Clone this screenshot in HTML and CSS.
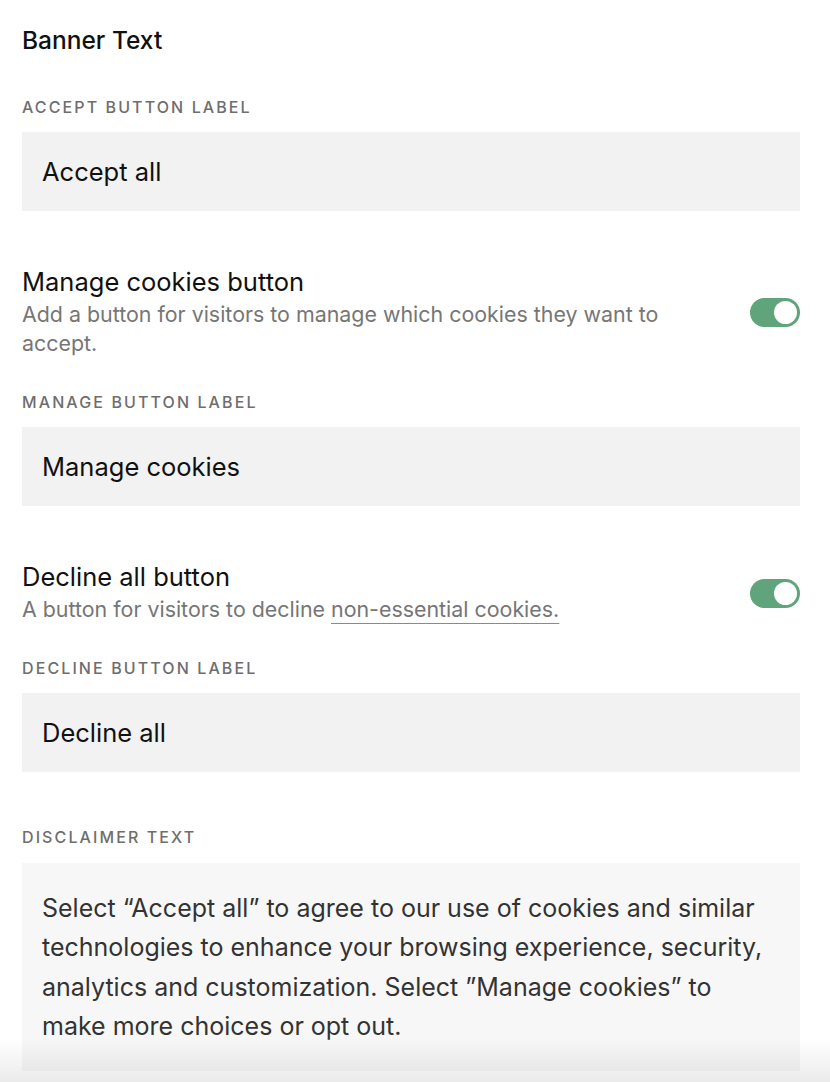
FILE: index.html
```html
<!DOCTYPE html>
<html>
<head>
<meta charset="utf-8">
<link rel="stylesheet" href="styles.css">
</head>
<body>
<div class="panel">
  <h2 class="section-title">Banner Text</h2>

  <div class="field">
    <div class="field-label">ACCEPT BUTTON LABEL</div>
    <div class="input">Accept all</div>
  </div>

  <div class="toggle-row">
    <div class="toggle-text">
      <div class="toggle-title">Manage cookies button</div>
      <div class="toggle-desc">Add a button for visitors to manage which cookies they want to accept.</div>
    </div>
    <div class="switch on"><span class="knob"></span></div>
  </div>

  <div class="field">
    <div class="field-label">MANAGE BUTTON LABEL</div>
    <div class="input">Manage cookies</div>
  </div>

  <div class="toggle-row">
    <div class="toggle-text">
      <div class="toggle-title">Decline all button</div>
      <div class="toggle-desc">A button for visitors to decline <span class="link">non-essential cookies.</span></div>
    </div>
    <div class="switch on"><span class="knob"></span></div>
  </div>

  <div class="field">
    <div class="field-label">DECLINE BUTTON LABEL</div>
    <div class="input">Decline all</div>
  </div>

  <div class="field disclaimer-field">
    <div class="field-label">DISCLAIMER TEXT</div>
    <div class="textarea">Select “Accept all” to agree to our use of cookies and similar technologies to enhance your browsing experience, security, analytics and customization. Select ”Manage cookies” to make more choices or opt out.</div>
  </div>
</div>
<div class="bottom-fade"></div>
</body>
</html>
```

FILE: styles.css
```css
html, body {
  margin: 0;
  padding: 0;
  background: #ffffff;
}
body {
  font-family: Inter, "Noto Sans", sans-serif;
  color: #111111;
  overflow: hidden;
  height: 1082px;
}
.panel {
  padding: 25px 30px 0 22px;
  display: flex;
  flex-direction: column;
}
.section-title {
  margin: 0;
  font-size: 24.5px;
  font-weight: 500;
  line-height: 30px;
  color: #111;
}
.field {
  display: flex;
  flex-direction: column;
  margin-top: 42px;
}
.field-label {
  font-size: 16px;
  font-weight: 500;
  letter-spacing: 2.1px;
  line-height: 20px;
  color: #6e6e6e;
  margin-bottom: 15px;
}
.input {
  background: #f2f2f2;
  height: 79px;
  padding: 0 20px;
  display: flex;
  align-items: center;
  font-size: 25.5px;
  color: #111;
}
.toggle-row {
  display: flex;
  align-items: center;
  justify-content: space-between;
  margin-top: 56px;
}
.toggle-text {
  flex: 1;
  max-width: 680px;
}
.toggle-title {
  font-size: 25.5px;
  line-height: 30px;
  color: #111;
}
.toggle-desc {
  font-size: 21.4px;
  line-height: 29px;
  margin-top: 3px;
  color: #767676;
}
.link {
  text-decoration: underline;
  text-decoration-color: #8a8a8a;
  text-underline-offset: 6px;
  text-decoration-thickness: 1px;
}
.toggle-row + .field {
  margin-top: 34px;
}
.switch {
  width: 50px;
  height: 29px;
  border-radius: 15px;
  background: #5fa47b;
  position: relative;
  flex: none;
}
.knob {
  position: absolute;
  width: 23px;
  height: 23px;
  border-radius: 50%;
  background: #fff;
  top: 3px;
  right: 3px;
}
.disclaimer-field {
  margin-top: 55px;
}
.disclaimer-field .field-label {
  margin-bottom: 16px;
}
.textarea {
  background: #f7f7f7;
  padding: 26px 20px 25px 20px;
  font-size: 25px;
  line-height: 39.3px;
  color: #333;
}
.bottom-fade {
  position: fixed;
  left: 0;
  right: 0;
  bottom: 0;
  height: 44px;
  background: linear-gradient(to bottom, rgba(0,0,0,0) 0%, rgba(0,0,0,0.08) 100%);
  pointer-events: none;
}
```
